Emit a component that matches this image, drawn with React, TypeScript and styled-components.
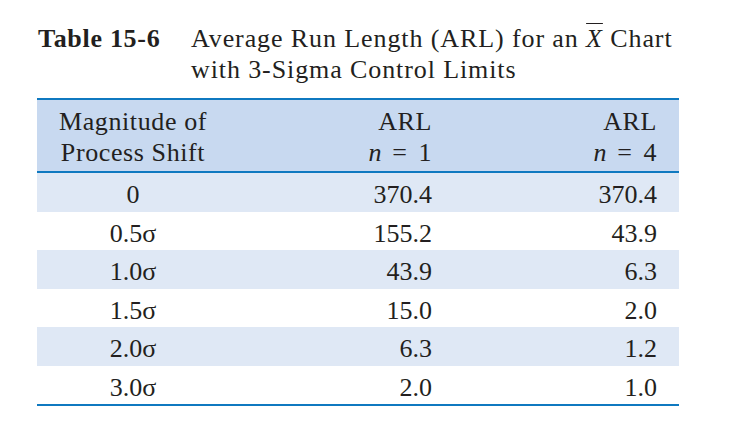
import React from "react";
import styled, { createGlobalStyle } from "styled-components";

const Global = createGlobalStyle`
  html, body { margin: 0; padding: 0; background: #ffffff; }
  body { font-family: "Liberation Serif", "Times New Roman", serif; color: #231f20; }
`;

const Page = styled.div`
  width: 734px;
  height: 432px;
  padding: 23px 55px 0 37px;
  box-sizing: border-box;
`;

const Caption = styled.div`
  display: flex;
  font-size: 26px;
  line-height: 31px;
  margin-bottom: 13px;
`;

const Label = styled.div`
  font-weight: bold;
  width: 153px;
  flex-shrink: 0;
  padding-left: 1px;
  letter-spacing: 0.7px;
`;

const Title = styled.div`
  letter-spacing: 0.9px;
`;

const Bar = styled.span`
  font-style: italic;
  text-decoration: overline;
  text-decoration-thickness: 1px;
`;

const Table = styled.div`
  width: 642px;
  border-top: 2px solid #0f79c0;
  border-bottom: 2px solid #0f79c0;
  font-size: 26px;
`;

const Row = styled.div<{ $bg: string; $head?: boolean }>`
  display: grid;
  grid-template-columns: 192px 203px 1fr;
  background: ${(p) => p.$bg};
  line-height: ${(p) => (p.$head ? "31px" : "30px")};
  letter-spacing: ${(p) => (p.$head ? "0.6px" : "0")};
  padding: ${(p) => (p.$head ? "6px 22px 3px 0" : "7px 22px 1.5px 0")};
  border-bottom: ${(p) => (p.$head ? "2px solid #0f79c0" : "none")};
`;

const Cell = styled.div<{ $align: "center" | "right" }>`
  text-align: ${(p) => p.$align};
  white-space: nowrap;
`;

const Ital = styled.span`
  font-style: italic;
`;

const Eq = styled.span`
  padding: 0 11px 0 10px;
`;

const rows = [
  ["0", "370.4", "370.4"],
  ["0.5σ", "155.2", "43.9"],
  ["1.0σ", "43.9", "6.3"],
  ["1.5σ", "15.0", "2.0"],
  ["2.0σ", "6.3", "1.2"],
  ["3.0σ", "2.0", "1.0"],
];

export default function App() {
  return (
    <>
      <Global />
      <Page>
        <Caption>
          <Label>Table 15-6</Label>
          <Title>
            Average Run Length (ARL) for an <Bar>X</Bar> Chart
            <br />
            with 3-Sigma Control Limits
          </Title>
        </Caption>
        <Table>
          <Row $bg="#c8d9f0" $head>
            <Cell $align="center">
              Magnitude of
              <br />
              Process Shift
            </Cell>
            <Cell $align="right">
              ARL
              <br />
              <Ital>n</Ital>
              <Eq>=</Eq>1
            </Cell>
            <Cell $align="right">
              ARL
              <br />
              <Ital>n</Ital>
              <Eq>=</Eq>4
            </Cell>
          </Row>
          {rows.map((r, i) => (
            <Row key={i} $bg={i % 2 === 0 ? "#dfe8f5" : "#ffffff"}>
              <Cell $align="center">{r[0]}</Cell>
              <Cell $align="right">{r[1]}</Cell>
              <Cell $align="right">{r[2]}</Cell>
            </Row>
          ))}
        </Table>
      </Page>
    </>
  );
}
